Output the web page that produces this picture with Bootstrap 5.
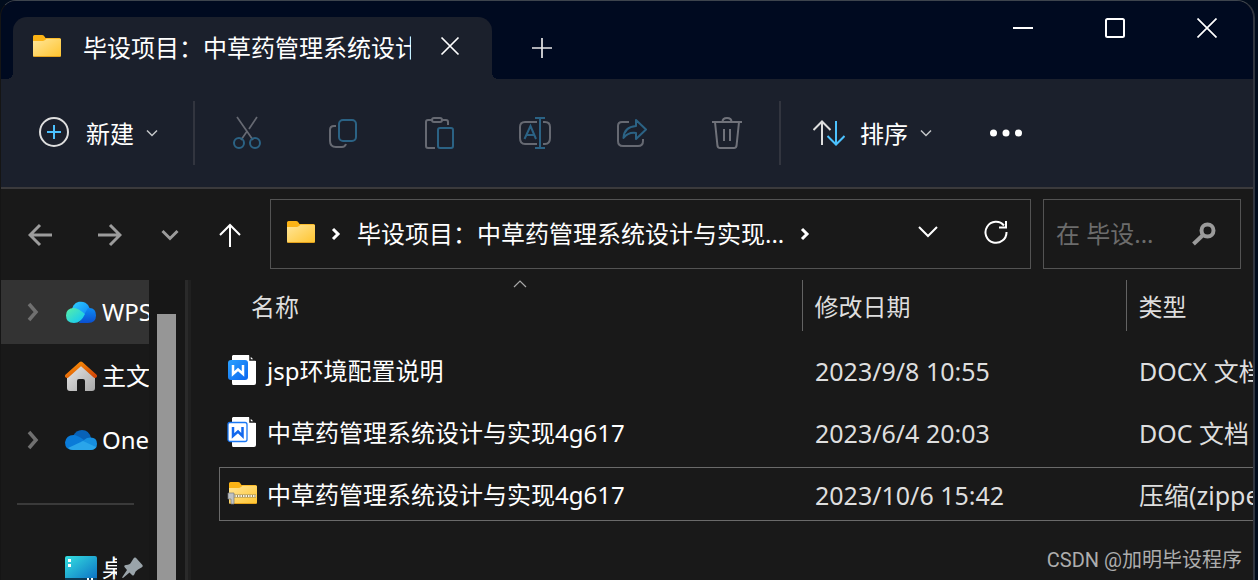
<!DOCTYPE html>
<html lang="zh-CN" data-bs-theme="dark">
<head>
<meta charset="utf-8">
<meta name="viewport" content="width=device-width, initial-scale=1">
<title>毕设项目：中草药管理系统设计与实现</title>
<link href="https://cdn.jsdelivr.net/npm/bootstrap@5.3.0/dist/css/bootstrap.min.css" rel="stylesheet">
<style>
  body { height: 100vh; overflow: hidden; background: #010c1c; color: #fff; font-family: "Noto Sans", "Noto Sans CJK SC", sans-serif; font-size: 24px; line-height: 36px; }
  svg { flex: none; display: block; fill: none; }
  .window { height: 100vh; margin-right: 3px; border: 1px solid #3d444d; border-right: 2px solid #30353f; border-left-color: #151515; border-bottom: 0; border-radius: 16px 18px 0 0; background: #191919; overflow: hidden; }
  .plain-btn { border: 0; padding: 0; background: transparent; color: inherit; display: flex; align-items: center; justify-content: center; flex: none; }
  .plain-btn:hover { background-color: #ffffff14; }

  /* title strip */
  .title-strip { height: 78px; background: #000a20; padding-left: 12px; }
  .file-tab { width: 479px; height: 62px; background: #1b202c; border-radius: 14px 14px 0 0; padding: 0 20px; position: relative; }
  .file-tab::before, .file-tab::after { content: ""; position: absolute; bottom: 0; width: 6px; height: 6px; }
  .file-tab::before { right: 100%; background: radial-gradient(circle at 0 0, transparent 6px, #1b202c 6px); }
  .file-tab::after { left: 100%; background: radial-gradient(circle at 100% 0, transparent 6px, #1b202c 6px); }
  .tab-title { width: 328px; margin-left: 22px; overflow: hidden; white-space: nowrap; }
  .tab-close { width: 40px; height: 40px; margin-left: 19px; }
  .tab-add { width: 60px; height: 62px; margin-left: 20px; }
  .win-btn { width: 92px; height: 54px; }

  /* command bar */
  .command-bar { height: 110px; background: #1b202c; border-bottom: 2px solid #3b3a3c; }
  .cmd-new { width: 192px; height: 64px; padding-left: 37px; justify-content: flex-start; }
  .cmd-icon { width: 96px; height: 64px; }
  .cmd-icon:disabled { opacity: 1; }
  .cmd-sort { height: 64px; padding: 0 20px 0 32px; }
  .cmd-label { margin: 2px 12px 0 16px; }
  .cmd-sort .cmd-label { margin-left: 15px; }
  .cmd-more { width: 96px; height: 64px; margin-left: 6px; }
  .cmd-rule { width: 2px; height: 64px; background: #32353f; }

  /* address row */
  .address-row { height: 91px; padding: 10px 12px 11px 4px; }
  .nav-group { padding-top: 2px; }
  .nav-btn { width: 70px; height: 60px; }
  .nav-recent { width: 50px; }
  .address-box { border: 1px solid #535353; margin-left: 5px; padding-left: 16px; }
  .address-box .plain-btn { width: 68px; height: 68px; }
  .crumb-link { color: #fff; text-decoration: none; white-space: nowrap; overflow: hidden; }
  .search-box { width: 198px; margin-left: 12px; border: 1px solid #535353; padding: 0 24px 0 12px; }
  .search-box input { width: 100%; min-width: 0; border: 0; padding: 0; background: transparent; color: #fff; outline: 0; }
  .search-box input::placeholder { color: #6c6c6c; opacity: 1; }

  /* navigation pane */
  .side-list { width: 148px; }
  .side-item { height: 64px; color: #fff; text-decoration: none; white-space: nowrap; overflow: hidden; }
  .side-item.selected { background: #333; }
  .side-arrow { width: 64px; padding-left: 25px; flex: none; }
  .side-label { margin-left: 5px; overflow: hidden; }
  .side-label.pinned { width: 15px; margin-right: 4px; }
  .side-rule { height: 64px; padding: 31px 15px 31px 16px; }
  .side-rule span { display: block; height: 2px; background: #3a3a3a; }
  .side-scroll { width: 36px; padding: 34px 9px 0 8px; background: #171717; }
  .side-scroll span { display: block; height: 100%; background: #969696; }
  .splitter { width: 6px; background: #202020; border-left: 3px solid #2a2a2a; }

  /* file list */
  .file-pane { padding-left: 28px; overflow: hidden; }
  .file-table { table-layout: fixed; --bs-table-bg: transparent; --bs-table-color: #dedede; width: 100%; }
  .file-table th { height: 51px; font-weight: 400; padding: 0; vertical-align: middle; color: #dedede; border: 0; }
  .file-table th + th { border-left: 1px solid #636363; padding: 2px 0 0 12px; }
  .file-table td { height: 62px; padding: 0 0 0 13px; font-size: 25px; vertical-align: middle; white-space: nowrap; overflow: hidden; border: 0; }
  .file-table td:first-child { padding-left: 8px; font-size: 24px; color: #fff; }
  .file-table tbody::before { content: ""; display: block; height: 9px; }
  .file-table tr.focused { position: relative; }
  .file-table tr.focused td:first-child::after { content: ""; position: absolute; inset: 3px -3px 5px 0; border: 1px solid #6a6a6a; pointer-events: none; }
  .col-name { width: 583px; }
  .col-date { width: 324px; }
  .name-head { margin-left: 20px; padding-left: 12px; height: 51px; line-height: 54px; }
  .watermark { right: 16px; bottom: 5px; font: 20px/30px Roboto, "Noto Sans CJK SC", sans-serif; color: #adadad; }
</style>
</head>
<body>
<svg width="0" height="0" class="position-absolute" aria-hidden="true">
  <defs>
    <linearGradient id="gFolder" x1="0" y1="0" x2="1" y2="1"><stop offset="0" stop-color="#ffe69a"/><stop offset="1" stop-color="#ffc42e"/></linearGradient>
    <linearGradient id="gWpsL" x1="0" y1="0" x2="1" y2="1"><stop offset="0" stop-color="#5af0a4"/><stop offset="1" stop-color="#0bc4ff"/></linearGradient>
    <linearGradient id="gWpsT" x1="0" y1="0" x2="1" y2="1"><stop offset="0" stop-color="#30d2ff"/><stop offset="1" stop-color="#0a7bf4"/></linearGradient>
    <linearGradient id="gWpsR" x1="0" y1="0" x2="0" y2="1"><stop offset="0" stop-color="#0d8cf5"/><stop offset="1" stop-color="#0a4fd0"/></linearGradient>
    <linearGradient id="gHome" x1="0" y1="0" x2="1" y2="1"><stop offset="0" stop-color="#e8e8e8"/><stop offset="1" stop-color="#a8a8a8"/></linearGradient>
    <linearGradient id="gRoof" x1="0" y1="0" x2="1" y2="1"><stop offset="0" stop-color="#fb9408"/><stop offset="1" stop-color="#d24607"/></linearGradient>
    <linearGradient id="gDesk" x1="0" y1="0" x2="1" y2="1"><stop offset="0" stop-color="#35e0e0"/><stop offset="1" stop-color="#0b6fc4"/></linearGradient>
    <linearGradient id="gDoc" x1="0" y1="0" x2="1" y2="1"><stop offset="0" stop-color="#2ba2ff"/><stop offset="1" stop-color="#0b66ef"/></linearGradient>
    <symbol id="folder" viewBox="0 0 28 22"><path d="M0 1.500Q0 0 1.500 0H9Q10.500 0 11.300 1.300L12.500 3H26.500Q28 3 28 4.500V12H0Z" fill="#fbb315"/><path d="M0 6H9.500Q11 6 12 5L13.500 3.700H27Q28 3.700 28 5V20.500Q28 22 26.500 22H1.500Q0 22 0 20.500Z" fill="url(#gFolder)"/><path d="M1 21.500H27" stroke="#e5a21c"/></symbol>
    <symbol id="chev" viewBox="0 0 12 8"><path d="M1 1.500L6 6.500L11 1.500" stroke="#c4c6c9" stroke-width="1.500" fill="none"/></symbol>
    <symbol id="crumb" viewBox="0 0 10 14"><path d="M2 2L7 7L2 12" stroke="currentColor" stroke-width="3" fill="none"/></symbol>
    <symbol id="expand" viewBox="0 0 14 20"><path d="M3 2L10 10L3 18" stroke="#707070" stroke-width="3.500" fill="none"/></symbol>
  </defs>
</svg>

<div class="window d-flex flex-column">
  <header class="title-strip d-flex align-items-end flex-shrink-0">
    <div class="file-tab d-flex align-items-center flex-shrink-0">
      <svg width="28" height="22" class="mb-1"><use href="#folder"/></svg>
      <span class="tab-title">毕设项目：中草药管理系统设计</span>
      <button class="plain-btn tab-close" aria-label="关闭标签页"><svg width="20" height="20" class="mb-1"><path d="M1.500 1.500L18.500 18.500M18.500 1.500L1.500 18.500" stroke="#fff" stroke-width="1.700"/></svg></button>
    </div>
    <button class="plain-btn tab-add" aria-label="新建标签页"><svg width="20" height="20"><path d="M10 0V20M0 10H20" stroke="#e8e8e8" stroke-width="1.700"/></svg></button>
    <div class="d-flex ms-auto me-px align-self-start">
      <button class="plain-btn win-btn" aria-label="最小化"><svg width="20" height="20"><path d="M0 10H20" stroke="#fff" stroke-width="2"/></svg></button>
      <button class="plain-btn win-btn" aria-label="最大化"><svg width="20" height="20"><rect x="1" y="1" width="18" height="18" rx="1.500" stroke="#fff" stroke-width="2"/></svg></button>
      <button class="plain-btn win-btn" aria-label="关闭"><svg width="20" height="20"><path d="M.5 .5L19.500 19.500M19.500 .5L.5 19.500" stroke="#fff" stroke-width="1.700"/></svg></button>
    </div>
  </header>

  <div class="command-bar d-flex align-items-center flex-shrink-0" role="toolbar" aria-label="命令">
    <button class="plain-btn cmd-new">
      <svg width="32" height="32"><circle cx="16" cy="15" r="14" stroke="#dedede" stroke-width="2"/><path d="M16 8V22M9 15H23" stroke="#4cc2ff" stroke-width="2"/></svg>
      <span class="cmd-label">新建</span>
      <svg width="12" height="8"><use href="#chev"/></svg>
    </button>
    <span class="cmd-rule me-1"></span>
    <button class="plain-btn cmd-icon" disabled aria-label="剪切"><svg width="32" height="34" stroke="#666972" stroke-width="1.700"><path d="M6 1L22 24M26 1L18 13M15.500 16L10 24"/><g stroke="#2b6284" stroke-width="2"><circle cx="8" cy="27" r="5"/><circle cx="24" cy="27" r="5"/></g></svg></button>
    <button class="plain-btn cmd-icon" disabled aria-label="复制"><svg width="32" height="32" stroke="#666972" stroke-width="2"><path d="M9 9H7Q3 9 3 13V24Q3 30 9 30H15Q18 30 19 27"/><rect x="12" y="3" width="17" height="21" rx="4" stroke="#2b6284"/></svg></button>
    <button class="plain-btn cmd-icon" disabled aria-label="粘贴"><svg width="32" height="34" stroke="#666972" stroke-width="2"><path d="M9 4H5Q3 4 3 6V30Q3 32 5 32H12M19 4H23Q25 4 25 6V9"/><rect x="9" y="2" width="10" height="4" rx="2"/><rect x="15" y="12" width="15" height="20" rx="2" stroke="#2b6284"/></svg></button>
    <button class="plain-btn cmd-icon" disabled aria-label="重命名"><svg width="32" height="34" stroke="#666972" stroke-width="2"><path d="M18 6H6Q1 6 1 11V22Q1 28 6 28H18M24 6H26Q31 6 31 11V22Q31 28 26 28H24"/><path d="M16 2H26M21 2V32M16 32H26M5.500 23L11.500 10L17 23M7.500 19H15.500" stroke="#2b6284"/></svg></button>
    <button class="plain-btn cmd-icon" disabled aria-label="共享"><svg width="32" height="34" stroke="#666972" stroke-width="2" stroke-linejoin="round"><path d="M14 6H7Q3 6 3 10V25Q3 30 8 30H23Q28 30 28 25V23"/><path d="M21 4L31 13.500L21 23V17Q13 16 8.500 22Q9 11 21 10Z" stroke="#2b6284"/></svg></button>
    <button class="plain-btn cmd-icon" disabled aria-label="删除"><svg width="32" height="34" stroke="#70727a" stroke-width="2"><path d="M1 6H31M11.500 6Q11.500 2 16 2Q20.500 2 20.500 6M4 6L6.500 30Q7 32 9 32H23Q25 32 25.500 30L28 6M13 13V25M19 13V25"/></svg></button>
    <span class="cmd-rule ms-1"></span>
    <button class="plain-btn cmd-sort">
      <svg width="32" height="26"><path d="M9 25V2M.5 10L9 1.500L17.500 10" stroke="#dedede" stroke-width="2"/><path d="M23 1V24M14.500 16L23 24.500L31.500 16" stroke="#4cc2ff" stroke-width="2"/></svg>
      <span class="cmd-label">排序</span>
      <svg width="12" height="8"><use href="#chev"/></svg>
    </button>
    <button class="plain-btn cmd-more" aria-label="查看更多"><svg width="32" height="8"><g fill="#fff"><circle cx="3.500" cy="4" r="3.500"/><circle cx="16" cy="4" r="3.500"/><circle cx="28.500" cy="4" r="3.500"/></g></svg></button>
  </div>

  <div class="address-row d-flex flex-shrink-0">
    <div class="nav-group d-flex align-items-center">
      <button class="plain-btn nav-btn" aria-label="后退"><svg width="24" height="24"><path d="M24 12H2M12 2L2 12L12 22" stroke="#9c9c9c" stroke-width="3"/></svg></button>
      <button class="plain-btn nav-btn" aria-label="前进"><svg width="24" height="24"><path d="M0 12H22M12 2L22 12L12 22" stroke="#9c9c9c" stroke-width="3"/></svg></button>
      <button class="plain-btn nav-btn nav-recent" aria-label="最近位置"><svg width="18" height="12"><path d="M1.500 2L9 9.500L16.500 2" stroke="#9c9c9c" stroke-width="3"/></svg></button>
      <button class="plain-btn nav-btn" aria-label="向上"><svg width="22" height="24"><path d="M11 24V2M1 12L11 2L21 12" stroke="#fff" stroke-width="2"/></svg></button>
    </div>
    <nav class="address-box d-flex align-items-center flex-grow-1 overflow-hidden" aria-label="地址">
      <svg width="28" height="22" class="mb-1"><use href="#folder"/></svg>
      <svg width="10" height="14" class="mx-3"><use href="#crumb"/></svg>
      <a class="crumb-link" href="#">毕设项目：中草药管理系统设计与实现...</a>
      <svg width="10" height="14" class="mx-3"><use href="#crumb"/></svg>
      <button class="plain-btn ms-auto" aria-label="以前的位置"><svg width="20" height="12" class="mb-1"><path d="M1 1L10 10L19 1" stroke="#fff" stroke-width="2"/></svg></button>
      <button class="plain-btn" aria-label="刷新"><svg width="24" height="24" class="mb-1"><path d="M20 5.500A10.500 10.500 0 1 0 22.500 12M22 1V7.500H15" stroke="#fff" stroke-width="2"/></svg></button>
    </nav>
    <label class="search-box d-flex align-items-center flex-shrink-0">
      <input type="text" placeholder="在 毕设..." aria-label="搜索">
      <svg width="24" height="24"><circle cx="15.500" cy="8.500" r="6" stroke="#9b9b9b" stroke-width="4"/><path d="M11 13L1.500 22" stroke="#9b9b9b" stroke-width="4"/></svg>
    </label>
  </div>

  <div class="d-flex flex-grow-1 overflow-hidden">
    <nav class="side-list flex-shrink-0" aria-label="导航窗格">
      <a class="side-item selected d-flex align-items-center" href="#"><span class="side-arrow"><svg width="14" height="20"><use href="#expand"/></svg></span>
        <svg width="32" height="24"><path d="M7 12A9 9 0 0 1 24.500 8L17 20Z" fill="url(#gWpsT)"/><path d="M14 23L23 8Q31 7 31 15.500Q31 23 23 23Z" fill="url(#gWpsR)"/><path d="M9 23Q1 23 1 15.500Q1 8 9 8Q13 8 20 14Q16 23 9 23Z" fill="url(#gWpsL)"/></svg><span class="side-label">WPS</span></a>
      <a class="side-item d-flex align-items-center" href="#"><span class="side-arrow"></span>
        <svg width="32" height="32"><path d="M16 4L30 17V28Q30 31 27 31H20V21Q20 19 18 19H14Q12 19 12 21V31H5Q2 31 2 28V17Z" fill="url(#gHome)"/><path d="M2 16L16 3.500L30 16" stroke="url(#gRoof)" stroke-width="4" stroke-linecap="round" stroke-linejoin="round"/></svg><span class="side-label">主文</span></a>
      <a class="side-item d-flex align-items-center" href="#"><span class="side-arrow"><svg width="14" height="20"><use href="#expand"/></svg></span>
        <svg width="32" height="22"><path d="M8 7Q11 1 17 1Q24 1 26 9L19 16Z" fill="#0862b8"/><path d="M8 21Q0 21 0 13.500Q1 6 8.500 6Q12 6 19 11L8 21Z" fill="#0a7bd8"/><path d="M16 13L22 9Q32 7 32 15Q32 21 25 21Z" fill="#168fe0"/><path d="M3 19L18 12L31 18Q29 21 25 21H8Q5 21 3 19Z" fill="#2aa5ea"/></svg><span class="side-label">One</span></a>
      <div class="side-rule"><span></span></div>
      <a class="side-item d-flex align-items-center" href="#"><span class="side-arrow"></span>
        <svg width="32" height="24"><rect width="32" height="24" rx="2" fill="url(#gDesk)"/><path d="M0 22H32V24H0Z" fill="#0c3b57"/><path d="M3 3h3v3H3ZM3 8h3v3H3ZM22 22h2v2h-2ZM26 22h2v2h-2Z" fill="#fff"/></svg><span class="side-label pinned">桌</span>
        <svg width="24" height="24"><path d="M12.500 2.500Q14 .5 16 3L20.500 8Q23 10 20.500 11.500L17 13.500Q14 15 13.500 18Q12.500 20.500 11 19L8.500 16.500L2 22L1 21.500L6 14L3.500 11Q2.500 9.500 5 9Q9 8.500 10 6.500Z" fill="#9aa4aa"/></svg></a>
    </nav>
    <div class="side-scroll flex-shrink-0"><span></span></div>
    <div class="splitter flex-shrink-0"></div>
    <main class="file-pane flex-grow-1">
      <table class="table table-borderless file-table mb-0">
        <colgroup><col class="col-name"><col class="col-date"><col></colgroup>
        <thead><tr>
          <th scope="col"><div class="name-head position-relative">名称<svg width="14" height="8" class="position-absolute top-0 start-50 translate-middle-x"><path d="M1 7L7 1L13 7" stroke="#a8a8a8" stroke-width="1.200"/></svg></div></th>
          <th scope="col">修改日期</th><th scope="col">类型</th>
        </tr></thead>
        <tbody>
          <tr><td><div class="d-flex align-items-center gap-2"><svg width="32" height="32"><path d="M6 0H22L29 6V28Q29 30 27 30H6Q5 30 5 28V1Z" fill="#fff"/><path d="M23 0L28 5H23Z" fill="#fff" stroke="#191919" stroke-width="1.500"/><rect x="1" y="5" width="20" height="20" rx="3" fill="url(#gDoc)"/><path d="M6 10V19L11 14.500L16 19V10" stroke="#fff" stroke-width="2.500"/></svg><span>jsp环境配置说明</span></div></td><td>2023/9/8 10:55</td><td>DOCX 文档</td></tr>
          <tr><td><div class="d-flex align-items-center gap-2"><svg width="32" height="32"><path d="M6 0H22L29 6V28Q29 30 27 30H6Q5 30 5 28V1Z" fill="#fff"/><path d="M23 0L28 5H23Z" fill="#fff" stroke="#191919" stroke-width="1.500"/><rect x="1" y="5.500" width="19" height="19" rx="2" fill="#fff" stroke="#1a78f5" stroke-width="1.300"/><path d="M6 10V19L11 14.500L15.500 19V10" stroke="#1268ee" stroke-width="2.500"/></svg><span>中草药管理系统设计与实现4g617</span></div></td><td>2023/6/4 20:03</td><td>DOC 文档</td></tr>
          <tr class="focused"><td><div class="d-flex align-items-center gap-2"><svg width="32" height="28"><use href="#folder" x="2" y="1" width="28" height="22"/><path d="M6 15H29" stroke="#9b8a5c" stroke-width="3"/><path d="M6 15H29" stroke="#f4f0e0" stroke-width="2" stroke-dasharray="1.500 1"/><path d="M1 12H7V23H4V18H1Z" fill="#bfc2c4" stroke="#77797b" stroke-width=".7"/></svg><span>中草药管理系统设计与实现4g617</span></div></td><td>2023/10/6 15:42</td><td>压缩(zippe</td></tr>
        </tbody>
      </table>
    </main>
  </div>
</div>
<div class="watermark position-absolute">CSDN @加明毕设程序</div>
<script src="https://cdn.jsdelivr.net/npm/bootstrap@5.3.0/dist/js/bootstrap.bundle.min.js"></script>
</body>
</html>
